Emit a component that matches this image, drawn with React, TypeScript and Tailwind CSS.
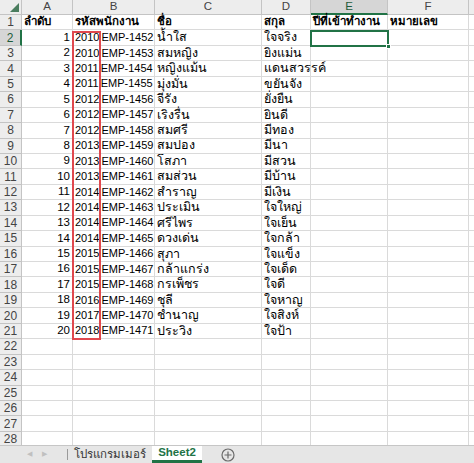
import React from "react";

const rows: [string, string, string, string][] = [
  ["1", "2010EMP-1452", "น้ำใส", "ใจจริง"],
  ["2", "2010EMP-1453", "สมหญิง", "ยิงแม่น"],
  ["3", "2011EMP-1454", "หญิงแม้น", "แดนสวรรค์"],
  ["4", "2011EMP-1455", "มุ่งมั่น", "ขยันจัง"],
  ["5", "2012EMP-1456", "จีรัง", "ยั่งยืน"],
  ["6", "2012EMP-1457", "เริงรื่น", "ยินดี"],
  ["7", "2012EMP-1458", "สมศรี", "มีทอง"],
  ["8", "2013EMP-1459", "สมปอง", "มีนา"],
  ["9", "2013EMP-1460", "โสภา", "มีสวน"],
  ["10", "2013EMP-1461", "สมส่วน", "มีบ้าน"],
  ["11", "2014EMP-1462", "สำราญ", "มีเงิน"],
  ["12", "2014EMP-1463", "ประเมิน", "ใจใหญ่"],
  ["13", "2014EMP-1464", "ศรีไพร", "ใจเย็น"],
  ["14", "2014EMP-1465", "ดวงเด่น", "ใจกล้า"],
  ["15", "2015EMP-1466", "สุภา", "ใจแข็ง"],
  ["16", "2015EMP-1467", "กล้าแกร่ง", "ใจเด็ด"],
  ["17", "2015EMP-1468", "กรเพ็ชร", "ใจดี"],
  ["18", "2016EMP-1469", "ชุลี", "ใจหาญ"],
  ["19", "2017EMP-1470", "ชำนาญ", "ใจสิงห์"],
  ["20", "2018EMP-1471", "ประวิง", "ใจป้า"],
];

const cols = ["A", "B", "C", "D", "E", "F", ""];

const cell =
  "border-r border-b border-[#dadada] px-[2px] flex items-center whitespace-nowrap overflow-visible leading-none";

export default function App() {
  const allRows: string[][] = [];
  allRows.push(["ลำดับ", "รหัสพนักงาน", "ชื่อ", "สกุล", "ปีที่เข้าทำงาน", "หมายเลข", ""]);
  rows.forEach((r) => allRows.push([r[0], r[1], r[2], r[3], "", "", ""]));
  for (let i = 22; i <= 28; i++) allRows.push(["", "", "", "", "", "", ""]);

  return (
    <div
      className="w-[474px] h-[463px] overflow-hidden bg-white flex flex-col text-black"
      style={{ fontFamily: '"Liberation Sans", Tahoma, "Noto Sans", sans-serif' }}
    >
      <div className="relative h-[445px] overflow-hidden">
        <div className="grid grid-cols-[22px_51px_82px_107px_49px_77px_81px_20px] grid-rows-[15px_repeat(28,15.45px)] text-[11px]">
          {/* corner */}
          <div className="relative bg-[#ededed] border-r border-b border-[#c4c4c4]">
            <div className="absolute right-[2px] bottom-[2px] w-0 h-0 border-l-[9px] border-l-transparent border-b-[9px] border-b-[#4a7d5e]" />
          </div>
          {cols.map((c, i) =>
            c === "E" ? (
              <div
                key={i}
                className="bg-[#d6d6d6] border-r border-[#c4c4c4] border-b-2 border-b-[#217346] flex items-center justify-center text-[11.5px] text-[#1e5c3a]"
              >
                {c}
              </div>
            ) : (
              <div
                key={i}
                className="bg-[#ededed] border-r border-b border-[#c4c4c4] flex items-center justify-center text-[11.5px] text-[#444]"
              >
                {c}
              </div>
            )
          )}
          {allRows.map((r, ri) => {
            const n = ri + 1;
            const isHeader = ri === 0;
            return (
              <React.Fragment key={ri}>
                {n === 2 ? (
                  <div className="bg-[#d6d6d6] border-b border-[#c4c4c4] border-r-2 border-r-[#217346] flex items-center justify-center text-[12px] text-[#1e5c3a]">
                    {n}
                  </div>
                ) : (
                  <div className="bg-[#ededed] border-r border-b border-[#c4c4c4] flex items-center justify-center text-[12px] text-[#444]">
                    {n}
                  </div>
                )}
                {r.map((v, ci) => {
                  let cls = cell;
                  if (isHeader) cls += " font-bold text-[11.5px]";
                  else if (ci === 0) cls += " justify-end text-[11.5px]";
                  else if (ci === 2 || ci === 3) cls += " text-[12.5px]";
                  let content: React.ReactNode = v;
                  if (!isHeader && ci === 1 && v) {
                    content = (
                      <>
                        <span>{v.slice(0, 4)}</span>
                        <span className="ml-[2px]">{v.slice(4)}</span>
                      </>
                    );
                  }
                  return (
                    <div key={ci} className={cls}>
                      {content}
                    </div>
                  );
                })}
              </React.Fragment>
            );
          })}
        </div>
        {/* red annotation box around year */}
        <div className="absolute left-[72px] top-[31px] w-[29px] h-[309px] border-2 border-[#e0484e]" />
        {/* selected cell E2 */}
        <div className="absolute left-[310px] top-[30px] w-[79px] h-[17px] border-2 border-[#217346]" />
        <div className="absolute left-[386px] top-[44px] w-[5px] h-[5px] bg-[#217346] border border-white" />
      </div>
      {/* sheet tab bar */}
      <div className="h-[18px] bg-[#e6e6e6] border-t border-[#c6c6c6] flex items-stretch">
        <div className="w-[67px] flex items-center justify-center gap-[10px] text-[7px] text-[#c0c0c0] pl-[6px]">
          <span>◀</span>
          <span>▶</span>
        </div>
        <div className="w-px bg-[#9a9a9a] my-[3px]" />
        <div className="w-[84px] flex items-center justify-center text-[11.5px] text-[#333]">โปรแกรมเมอร์</div>
        <div className="w-[50px] bg-white border-b-[3px] border-[#217346] flex items-center justify-center text-[11.5px] font-bold text-[#217346]">
          Sheet2
        </div>
        <div className="w-[52px] flex items-center justify-center">
          <svg width="14" height="14" viewBox="0 0 14 14">
            <circle cx="7" cy="7" r="6" fill="none" stroke="#6b6b6b" strokeWidth="1.2" />
            <path d="M7 3.5v7M3.5 7h7" stroke="#6b6b6b" strokeWidth="1.2" />
          </svg>
        </div>
        <div className="flex-1" />
      </div>
    </div>
  );
}
